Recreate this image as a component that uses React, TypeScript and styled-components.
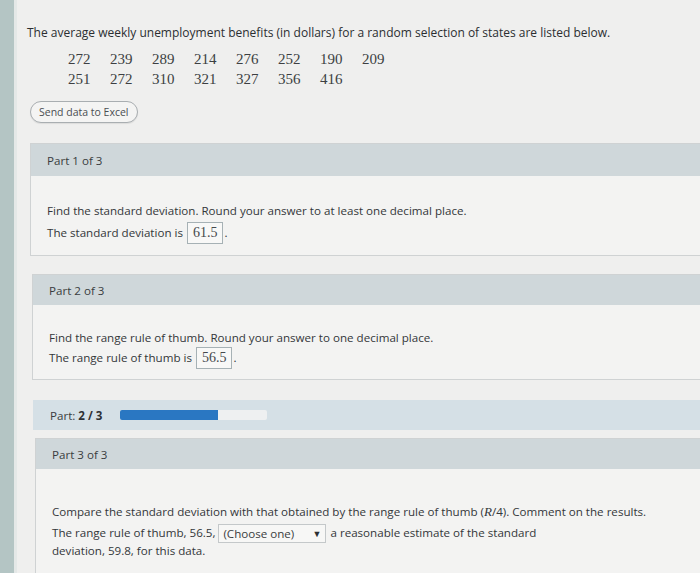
import styled, { createGlobalStyle } from 'styled-components';

const GlobalStyle = createGlobalStyle`
  body {
    margin: 0;
    background: #b6c6c5;
    font-family: "Open Sans", "Liberation Sans", sans-serif;
    color: #3a3d40;
  }
`;

const Page = styled.div`
  display: flex;
  width: 700px;
  height: 573px;
  overflow: hidden;
`;

const Rail = styled.div`
  width: 14px;
  flex-shrink: 0;
  background: #b4c5c4;
  border-right: 3px solid #e4e8e7;
`;

const Main = styled.div`
  flex: 1;
  background: #efefee;
  padding: 25px 0 0 10px;
  display: flex;
  flex-direction: column;

  & > * {
    flex-shrink: 0;
  }
`;

const Intro = styled.p`
  margin: 0;
  font-size: 12px;
  line-height: 16px;
  color: #2b2e31;
`;

const DataGrid = styled.div`
  display: grid;
  grid-template-columns: repeat(8, 42px);
  row-gap: 3px;
  margin: 10px 0 0 41px;
  font-family: "Liberation Serif", "Times New Roman", serif;
  font-size: 15px;
  line-height: 17px;
  color: #3c3f42;
`;

const ExcelButton = styled.button`
  align-self: flex-start;
  margin: 13px 0 0 3px;
  height: 22px;
  padding: 0 8px;
  border: 1px solid #a9aeb1;
  border-radius: 11px;
  background: #f4f4f3;
  font-family: "Open Sans", "Liberation Sans", sans-serif;
  font-size: 10.5px;
  color: #4a4e52;
  box-shadow: 0 1px 1px rgba(0, 0, 0, 0.08);
`;

const Panel = styled.section<{ $top: number; $left: number }>`
  margin: ${({ $top, $left }) => `${$top}px 0 0 ${$left}px`};
  border: 1px solid #cfd2d3;
  border-right: none;
  background: #f3f3f2;
`;

const PanelHeader = styled.div<{ $height: number }>`
  height: ${({ $height }) => $height}px;
  display: flex;
  align-items: center;
  padding-left: 16px;
  background: #cfd7da;
  font-size: 11.6px;
  color: #3a3d40;
`;

const PanelBody = styled.div<{ $height: number; $pad: number; $gap: number }>`
  height: ${({ $height }) => $height}px;
  padding: ${({ $pad }) => $pad}px 0 0 16px;
  box-sizing: border-box;
  display: flex;
  flex-direction: column;
  gap: ${({ $gap }) => $gap}px;
  font-size: 11.6px;
  line-height: 16px;
  color: #34373a;
`;

const Line = styled.div`
  display: flex;
  align-items: center;
  white-space: nowrap;
`;

const AnswerBox = styled.span`
  display: inline-flex;
  align-items: center;
  height: 20px;
  margin: 0 1px 0 4px;
  padding: 0 5px;
  border: 1px solid #a6b1b5;
  background: #f8f8f7;
  font-family: "Liberation Serif", "Times New Roman", serif;
  font-size: 14px;
  color: #45494c;
`;

const ProgressStrip = styled.div`
  margin: 20px 0 0 6px;
  height: 30px;
  display: flex;
  align-items: center;
  gap: 18px;
  padding-left: 17px;
  background: #d5e0e6;
  font-size: 11.6px;
  color: #3a3d40;
`;

const Strong = styled.b`
  font-weight: 700;
  color: #2e3134;
`;

const Track = styled.div`
  width: 147px;
  height: 10px;
  background: #eef0f1;
  border-radius: 2px;
  overflow: hidden;
`;

const Fill = styled.div`
  height: 100%;
  background: #2a77c2;
`;

const Paragraph = styled.div`
  line-height: 15px;
`;

const Select = styled.span`
  display: inline-flex;
  align-items: center;
  justify-content: space-between;
  width: 108px;
  height: 19px;
  margin: 0 4px 0 3px;
  padding: 0 4px;
  box-sizing: border-box;
  border: 1px solid #c4c8ca;
  background: #f7f7f6;
  vertical-align: middle;
  font-size: 11.6px;
  color: #3a3d40;
`;

const Caret = styled.span`
  font-size: 9px;
  color: #2c2f32;
`;

const Italic = styled.i`
  font-family: "Liberation Serif", "Times New Roman", serif;
  font-size: 13px;
`;

const rows = [
  [272, 239, 289, 214, 276, 252, 190, 209],
  [251, 272, 310, 321, 327, 356, 416],
];

export default function App() {
  const progress = 2 / 3;
  return (
    <>
      <GlobalStyle />
      <Page>
        <Rail />
        <Main>
          <Intro>
            The average weekly unemployment benefits (in dollars) for a random selection of states are listed below.
          </Intro>
          <DataGrid>
            {rows.flatMap((row, r) => row.map((value, i) => <span key={`${r}-${i}`}>{value}</span>))}
          </DataGrid>
          <ExcelButton>Send data to Excel</ExcelButton>

          <Panel $top={20} $left={3}>
            <PanelHeader $height={32}>Part 1 of 3</PanelHeader>
            <PanelBody $height={79} $pad={27} $gap={3}>
              <Line>Find the standard deviation. Round your answer to at least one decimal place.</Line>
              <Line>
                The standard deviation is <AnswerBox>61.5</AnswerBox>.
              </Line>
            </PanelBody>
          </Panel>

          <Panel $top={18} $left={5}>
            <PanelHeader $height={30}>Part 2 of 3</PanelHeader>
            <PanelBody $height={74} $pad={25} $gap={1}>
              <Line>Find the range rule of thumb. Round your answer to one decimal place.</Line>
              <Line>
                The range rule of thumb is <AnswerBox>56.5</AnswerBox>.
              </Line>
            </PanelBody>
          </Panel>

          <ProgressStrip>
            <span>
              Part: <Strong>2 / 3</Strong>
            </span>
            <Track>
              <Fill style={{ width: `${progress * 100}%` }} />
            </Track>
          </ProgressStrip>

          <Panel $top={8} $left={8}>
            <PanelHeader $height={30}>Part 3 of 3</PanelHeader>
            <PanelBody $height={120} $pad={35} $gap={4}>
              <Line>
                Compare the standard deviation with that obtained by the range rule of thumb (<Italic>R</Italic>/4). Comment on the results.
              </Line>
              <Paragraph>
                The range rule of thumb, 56.5,
                <Select>
                  (Choose one) <Caret>▼</Caret>
                </Select>
                a reasonable estimate of the standard
                <br />
                deviation, 59.8, for this data.
              </Paragraph>
            </PanelBody>
          </Panel>
        </Main>
      </Page>
    </>
  );
}
